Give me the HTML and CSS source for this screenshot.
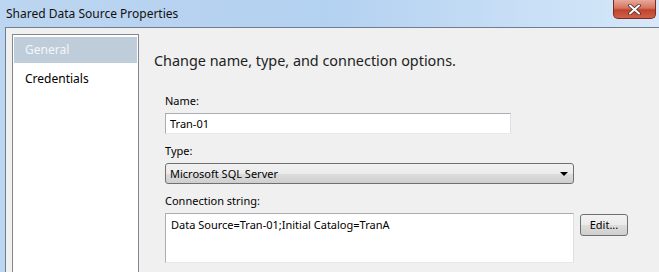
FILE: index.html
```html
<!DOCTYPE html>
<html lang="en">
<head>
  <meta charset="UTF-8">
  <title>Shared Data Source Properties</title>
  <link rel="stylesheet" href="styles.css">
</head>
<body>
  <div class="window">
    <!-- Title bar -->
    <div class="titlebar">
      <span class="title">Shared Data Source Properties</span>
      <div class="close-btn">
        <svg width="15" height="11" viewBox="0 0 15 11">
          <path d="M3 1.5 L12 9.5 M12 1.5 L3 9.5" stroke="#4a2a2a" stroke-width="3.6" stroke-linecap="round"/>
          <path d="M3 1.5 L12 9.5 M12 1.5 L3 9.5" stroke="#ffffff" stroke-width="2" stroke-linecap="round"/>
        </svg>
      </div>
    </div>

    <!-- Dialog body -->
    <div class="dialog">
      <div class="nav">
        <div class="nav-item selected">General</div>
        <div class="nav-item">Credentials</div>
      </div>

      <div class="content">
        <h1>Change name, type, and connection options.</h1>

        <div class="field">
          <label>Name:</label>
          <div class="textbox">Tran-01</div>
        </div>

        <div class="field">
          <label>Type:</label>
          <div class="combo">
            <span>Microsoft SQL Server</span>
            <span class="arrow"></span>
          </div>
        </div>

        <div class="field">
          <label>Connection string:</label>
          <div class="conn-row">
            <div class="textarea">Data Source=Tran-01;Initial Catalog=TranA</div>
            <div class="button">Edit...</div>
          </div>
        </div>
      </div>
    </div>
  </div>
</body>
</html>
```

FILE: styles.css
```css
* {
  margin: 0;
  padding: 0;
  box-sizing: border-box;
}

body {
  width: 659px;
  height: 272px;
  overflow: hidden;
  font-family: 'Noto Sans', 'Open Sans', sans-serif;
  font-size: 11px;
  color: #000;
  background: #b9d4ef;
}

.window {
  height: 272px;
  display: flex;
  flex-direction: column;
  background: linear-gradient(to right, #bcd5f0, #b3d1f1 50%, #d6e8f9);
}

.titlebar {
  height: 27px;
  display: flex;
  align-items: flex-start;
  padding-left: 6px;
}

.title {
  font-size: 12px;
  line-height: 27px;
  color: #111;
}

.close-btn {
  margin-left: auto;
  margin-right: 3px;
  width: 43px;
  height: 19px;
  border: 1px solid #7a2a20;
  border-top: none;
  border-radius: 0 0 5px 5px;
  background: linear-gradient(to bottom, #e9a99a, #d5735f 45%, #c0432c 55%, #d0604a);
  display: flex;
  align-items: center;
  justify-content: center;
}

.dialog {
  flex: 1;
  margin-left: 5px;
  border-top: 1px solid #6f7d8c;
  border-left: 1px solid #6f7d8c;
  background: #f0f0f0;
  display: flex;
  padding: 6px 0 0 6px;
}

.nav {
  width: 127px;
  background: #fff;
  border: 1px solid #828790;
  border-bottom: none;
  padding: 2px 1px 1px;
}

.nav-item {
  height: 26px;
  line-height: 26px;
  padding-left: 11px;
  font-size: 12px;
  margin-bottom: 3px;
}

.nav-item.selected {
  background: #bfcddb;
  color: #f4f6f8;
}

.content {
  flex: 1;
  padding: 16px 0 0 15px;
}

.content h1 {
  font-size: 14.4px;
  font-weight: normal;
  color: #222;
  line-height: 22px;
  margin-bottom: 21px;
}

.field {
  padding-left: 11px;
  margin-bottom: 9px;
}

.field label {
  display: block;
  font-size: 11px;
  line-height: 16px;
  margin-bottom: 4px;
}

.textbox {
  width: 346px;
  height: 21px;
  background: #fff;
  border: 1px solid #abadb3;
  border-right-color: #dbdfe6;
  border-bottom-color: #e3e9ef;
  padding-left: 4px;
  line-height: 19px;
  font-size: 11px;
}

.combo {
  width: 409px;
  height: 21px;
  border: 1px solid #707070;
  border-radius: 3px;
  background: linear-gradient(to bottom, #f2f2f2 0%, #ebebeb 50%, #dddddd 50%, #cfcfcf 100%);
  display: flex;
  align-items: center;
  padding: 0 5px 0 4px;
  font-size: 11px;
}

.arrow {
  margin-left: auto;
  width: 0;
  height: 0;
  border-left: 4px solid transparent;
  border-right: 4px solid transparent;
  border-top: 4px solid #000;
}

.conn-row {
  display: flex;
  align-items: flex-start;
  gap: 6px;
}

.textarea {
  width: 409px;
  height: 50px;
  background: #fff;
  border: 1px solid #abadb3;
  border-right-color: #dbdfe6;
  border-bottom-color: #e3e9ef;
  padding: 3px 5px;
  line-height: 15px;
  font-size: 11px;
}

.button {
  margin-top: 1px;
  width: 48px;
  height: 22px;
  border: 1px solid #707070;
  border-radius: 3px;
  background: linear-gradient(to bottom, #f2f2f2 0%, #ebebeb 50%, #dddddd 50%, #cfcfcf 100%);
  text-align: center;
  line-height: 20px;
  font-size: 11px;
}
```
